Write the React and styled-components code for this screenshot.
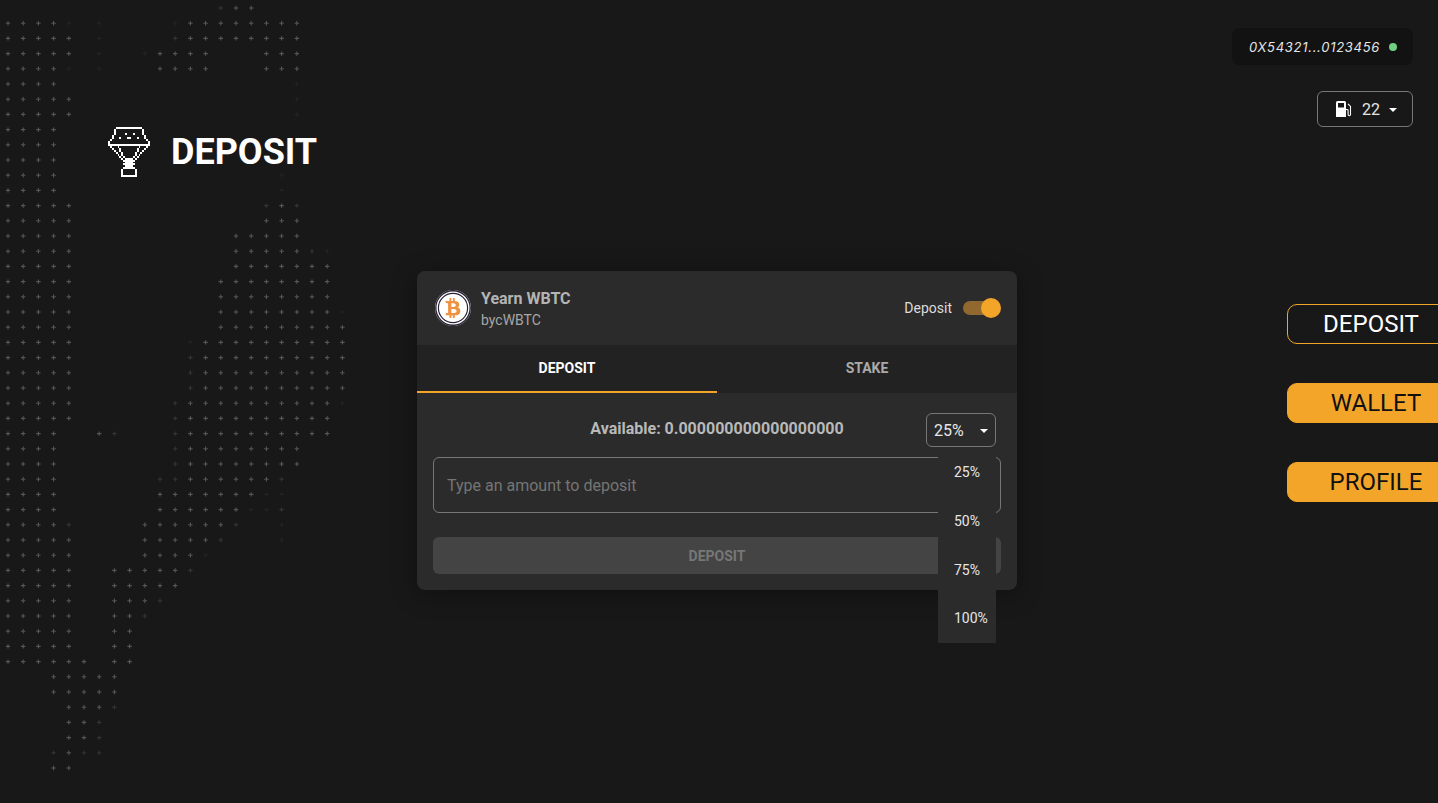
import React from "react";
import styled, { createGlobalStyle } from "styled-components";
import { FaBtc } from "react-icons/fa";

const GlobalStyle = createGlobalStyle`
  html, body {
    margin: 0;
    background: #181818;
    font-family: Roboto, "Liberation Sans", sans-serif;
  }
`;

const Page = styled.div`
  position: relative;
  display: grid;
  grid-template-columns: 417px 600px 421px;
  height: 803px;
  overflow: hidden;
  background: #181818;
`;

const DotLayer = styled.svg`
  position: absolute;
  top: 0;
  left: 0;
`;

const TitleColumn = styled.div`
  position: relative;
  display: flex;
  align-items: flex-start;
  gap: 21px;
  padding: 127px 0 0 108px;
`;

const PageTitle = styled.h1`
  margin: 4px 0 0;
  font-size: 36px;
  line-height: 42px;
  font-weight: 700;
  color: #fff;
`;

const Card = styled.div`
  position: relative;
  align-self: start;
  margin-top: 271px;
  border-radius: 8px;
  background: #2b2b2b;
  box-shadow: 0 4px 24px rgba(0, 0, 0, 0.35);
`;

const CardHeader = styled.div`
  display: flex;
  align-items: center;
  justify-content: space-between;
  height: 74px;
  padding: 0 17px 0 18px;
`;

const Vault = styled.div`
  display: flex;
  align-items: center;
  gap: 10px;
`;

const VaultText = styled.div`
  padding-top: 1px;
`;

const VaultName = styled.div`
  font-size: 16px;
  line-height: 19px;
  font-weight: 700;
  color: #b4b4b4;
`;

const VaultSymbol = styled.div`
  margin-top: 4px;
  font-size: 14px;
  line-height: 16px;
  color: #a6a6a6;
`;

const ToggleWrap = styled.div`
  display: flex;
  align-items: center;
  gap: 11px;
  font-size: 14px;
  color: #dcdcdc;
`;

const Track = styled.div`
  position: relative;
  width: 37px;
  height: 14px;
  border-radius: 7px;
  background: #91692e;
`;

const Thumb = styled.div`
  position: absolute;
  top: -3px;
  right: -1px;
  width: 20px;
  height: 20px;
  border-radius: 50%;
  background: #f3a52a;
`;

const Tabs = styled.div`
  display: grid;
  grid-template-columns: 1fr 1fr;
  background: #222;
`;

const Tab = styled.div`
  display: flex;
  align-items: center;
  justify-content: center;
  height: 46px;
  font-size: 14px;
  font-weight: 700;
  color: ${({ $active }) => ($active ? "#fff" : "#aaa")};
  border-bottom: 2px solid ${({ $active }) => ($active ? "#f3a52a" : "transparent")};
`;

const CardBody = styled.div`
  padding: 20px 16px 16px;
`;

const AvailableRow = styled.div`
  display: grid;
  grid-template-columns: 1fr auto 1fr;
  align-items: center;
  padding-right: 5px;
  margin-left: 5px;
`;

const Available = styled.div`
  grid-column: 2;
  padding-bottom: 4px;
  font-size: 16px;
  font-weight: 700;
  color: #b9b9b9;
`;

const SelectBox = styled.div`
  position: relative;
  justify-self: end;
  display: flex;
  align-items: center;
  justify-content: space-between;
  box-sizing: border-box;
  width: 70px;
  height: 34px;
  padding: 0 7px 0 7px;
  border: 1px solid #777;
  border-radius: 6px;
  font-size: 16px;
  color: #e6e6e6;
`;

const Caret = styled.span`
  width: 0;
  height: 0;
  margin-top: 1px;
  border-left: 4px solid transparent;
  border-right: 4px solid transparent;
  border-top: 4px solid #fff;
`;

const Menu = styled.div`
  position: absolute;
  z-index: 2;
  top: 34px;
  right: -1px;
  width: 58px;
  background: #2b2b2b;
`;

const MenuItem = styled.div`
  display: flex;
  align-items: center;
  height: 48.67px;
  padding-left: 16px;
  font-size: 14px;
  color: #e6e6e6;
`;

const AmountInput = styled.div`
  display: flex;
  align-items: center;
  box-sizing: border-box;
  height: 56px;
  margin-top: 10px;
  padding: 0 13px;
  border: 1px solid #777;
  border-radius: 6px;
  font-size: 16px;
  color: #757575;
`;

const SubmitButton = styled.div`
  display: flex;
  align-items: center;
  justify-content: center;
  height: 37px;
  margin-top: 24px;
  border-radius: 6px;
  background: #444;
  font-size: 14px;
  font-weight: 700;
  color: #777;
`;

const RightColumn = styled.div`
  position: relative;
  padding-top: 28px;
`;

const TopActions = styled.div`
  display: flex;
  flex-direction: column;
  align-items: flex-end;
  gap: 26px;
  padding-right: 25px;
`;

const WalletBadge = styled.div`
  display: flex;
  align-items: center;
  justify-content: space-between;
  box-sizing: border-box;
  width: 181px;
  height: 37px;
  padding: 0 16px 0 17px;
  border-radius: 8px;
  background: #121212;
  font-family: Inter, Roboto, sans-serif;
  font-size: 13px;
  font-style: italic;
  letter-spacing: 0.72px;
  color: #e6e6e6;
`;

const StatusDot = styled.span`
  width: 8px;
  height: 8px;
  border-radius: 50%;
  background: #6fcf82;
`;

const GasButton = styled.div`
  display: flex;
  align-items: center;
  box-sizing: border-box;
  width: 96px;
  height: 36px;
  padding-left: 18px;
  border: 1px solid #777;
  border-radius: 6px;
  font-size: 16px;
  color: #e6e6e6;
`;

const GasValue = styled.span`
  margin: 0 9px 0 10px;
`;

const Nav = styled.div`
  display: flex;
  flex-direction: column;
  gap: 39px;
  margin: 177px 0 0 270px;
`;

const NavButton = styled.div`
  display: flex;
  align-items: center;
  justify-content: center;
  flex: none;
  box-sizing: border-box;
  width: ${({ $width }) => $width}px;
  height: 40px;
  border-radius: 10px;
  border: 1px solid #f3a52a;
  background: ${({ $active }) => ($active ? "transparent" : "#f3a52a")};
  font-size: 24px;
  color: ${({ $active }) => ($active ? "#fff" : "#111")};
`;

// # full dot, + faint, . barely there
const DOT_ROWS = [
  "              +##",
  "####. .    .########",
  "##### .    +########",
  "##### .  .####   ###",
  "####. .   ####   ###",
  "####               .",
  "#####              .",
  "#####              .",
  "####",
  "####",
  "####",
  "####              .",
  "####              .",
  "#####            +#+",
  "#####            ###",
  "#####          #####",
  "#####          #####+.",
  "#####          #######",
  "#####         ########",
  "#####         ########",
  "#####         ########.",
  "#####         #########",
  "#####       .##########",
  "#####       +##########",
  "#####       +##########",
  "#####       +##########",
  "#####      +##########.",
  "#####      +##########",
  "####  #+   +##########",
  "####       +########",
  "####       +########",
  "####      ++######+",
  "####      #######..",
  "####      ######..+",
  "####+    ######+  .",
  "#####    #####+   .",
  "#####    ####.",
  "#####  #####+",
  "#####  #####",
  "#####  ###+",
  "#####  ##+",
  "#####  ##",
  "#####  ##",
  "###### ##",
  "   #####",
  "   #####",
  "    ###+",
  "    ##+",
  "    ##+",
  "   +#++",
  "   ##",
];

const dotPath = (kind) => {
  let d = "";
  DOT_ROWS.forEach((row, r) => {
    [...row].forEach((ch, c) => {
      if (ch !== kind) return;
      const x = 8 + 15.2 * c;
      const y = 8 + 15.2 * r;
      d += `M${x - 2.2} ${y - 0.55}h4.4v1.1h-4.4zM${x - 0.55} ${y - 2.2}h1.1v4.4h-1.1z`;
    });
  });
  return d;
};

const DotMap = () => (
  <DotLayer width="360" height="790" viewBox="0 0 360 790">
    <path d={dotPath("#")} fill="#565656" />
    <path d={dotPath("+")} fill="#343434" />
    <path d={dotPath(".")} fill="#232323" />
  </DotLayer>
);

const CHUTE = [
  "....xxxxxxxxxxxxxx....",
  "...x..............x...",
  "...x..............x...",
  "...x.....x...x....x...",
  "..x................x..",
  "..x...x...xx...x...x..",
  ".x..................x.",
  "x....................x",
  "x....................x",
  "xxxxxxxxxxxxxxxxxxxxxx",
  ".x...x..........x...x.",
  "..x...x........x...x..",
  "...x..x........x..x...",
  "....x..x......x..x....",
  ".....x.x......x.x.....",
  "......x.x....x.x......",
  ".......x.xxxx.x.......",
  "........xxxxxx........",
  ".........xxxx.........",
  "........xxxxxx........",
  ".........xxxx.........",
  "........xxxxxx........",
  ".......x......x.......",
  ".......x......x.......",
  ".......x......x.......",
  ".......xxxxxxxx.......",
];

const ChuteIcon = () => (
  <svg width="42" height="50" viewBox="0 0 22 26" shapeRendering="crispEdges">
    {CHUTE.map((row, r) =>
      [...row].map((ch, c) =>
        ch === "x" ? <rect key={`${r}-${c}`} x={c} y={r} width="1" height="1" fill="#fff" /> : null
      )
    )}
  </svg>
);

const CoinIcon = () => (
  <svg width="36" height="36" viewBox="0 0 36 36">
    <circle cx="18" cy="18" r="18" fill="#fff" />
    <circle cx="18" cy="18" r="17.2" fill="none" stroke="#2a2438" strokeWidth="1.4" />
    <circle cx="18" cy="18" r="14.6" fill="none" stroke="#2a2438" strokeWidth="1.2" />
    <FaBtc x="8" y="8" size="20" color="#f09242" />
  </svg>
);

const PumpIcon = () => (
  <svg width="16" height="16" viewBox="0 0 16 16">
    <path
      fill="#fff"
      fillRule="evenodd"
      d="M0 1.5A1.5 1.5 0 0 1 1.5 0h7A1.5 1.5 0 0 1 10 1.5V16H0zM2 2v4.5h6V2z"
    />
    <path
      fill="none"
      stroke="#fff"
      strokeWidth="1.1"
      d="M10 8.5h1.2a.9.9 0 0 1 .9.9v4.2a1.2 1.2 0 0 0 2.4 0V5.4L12 2.8"
    />
  </svg>
);

export default function App() {
  return (
    <Page>
      <GlobalStyle />
      <DotMap />
      <TitleColumn>
        <ChuteIcon />
        <PageTitle>DEPOSIT</PageTitle>
      </TitleColumn>
      <Card>
        <CardHeader>
          <Vault>
            <CoinIcon />
            <VaultText>
              <VaultName>Yearn WBTC</VaultName>
              <VaultSymbol>bycWBTC</VaultSymbol>
            </VaultText>
          </Vault>
          <ToggleWrap>
            Deposit
            <Track>
              <Thumb />
            </Track>
          </ToggleWrap>
        </CardHeader>
        <Tabs>
          <Tab $active>DEPOSIT</Tab>
          <Tab>STAKE</Tab>
        </Tabs>
        <CardBody>
          <AvailableRow>
            <Available>Available: 0.000000000000000000</Available>
            <SelectBox>
              25%
              <Caret />
              <Menu>
                <MenuItem>25%</MenuItem>
                <MenuItem>50%</MenuItem>
                <MenuItem>75%</MenuItem>
                <MenuItem>100%</MenuItem>
              </Menu>
            </SelectBox>
          </AvailableRow>
          <AmountInput>Type an amount to deposit</AmountInput>
          <SubmitButton>DEPOSIT</SubmitButton>
        </CardBody>
      </Card>
      <RightColumn>
        <TopActions>
          <WalletBadge>
            0X54321...0123456
            <StatusDot />
          </WalletBadge>
          <GasButton>
            <PumpIcon />
            <GasValue>22</GasValue>
            <Caret />
          </GasButton>
        </TopActions>
        <Nav>
          <NavButton $active $width={168}>DEPOSIT</NavButton>
          <NavButton $width={178}>WALLET</NavButton>
          <NavButton $width={178}>PROFILE</NavButton>
        </Nav>
      </RightColumn>
    </Page>
  );
}
